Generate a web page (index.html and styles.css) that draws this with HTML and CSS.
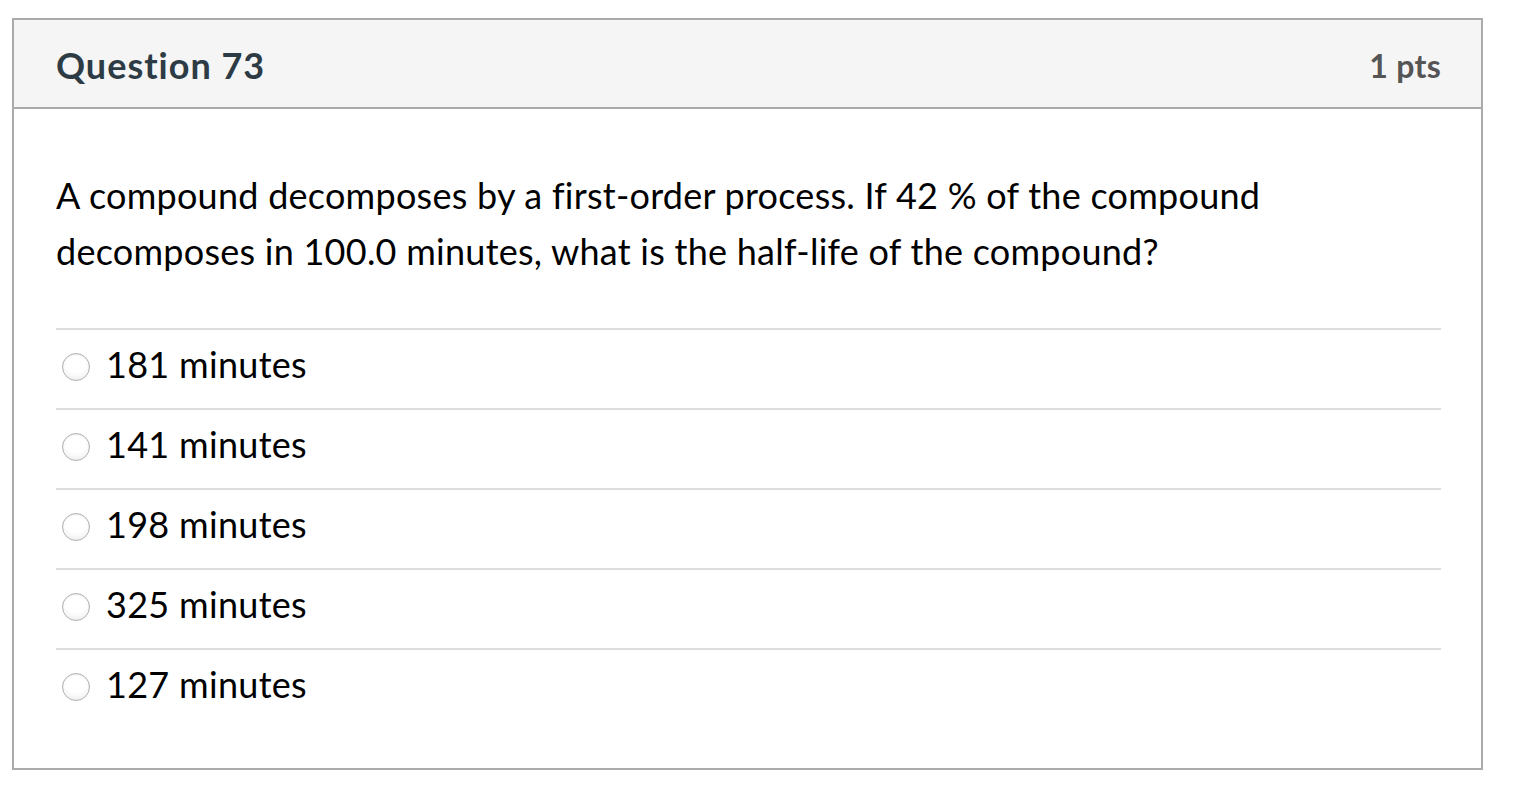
FILE: index.html
```html
<!DOCTYPE html>
<html>
<head>
<meta charset="utf-8">
<link rel="stylesheet" href="styles.css">
</head>
<body>
<div class="question">
  <div class="q-header">
    <h2 class="q-title">Question 73</h2>
    <span class="q-points">1 pts</span>
  </div>
  <div class="q-body">
    <p class="q-text">A compound decomposes by a first-order process. If 42 % of the compound decomposes in 100.0 minutes, what is the half-life of the compound?</p>
    <div class="answers">
      <label class="answer"><span class="radio"></span><span class="answer-text">181 minutes</span></label>
      <label class="answer"><span class="radio"></span><span class="answer-text">141 minutes</span></label>
      <label class="answer"><span class="radio"></span><span class="answer-text">198 minutes</span></label>
      <label class="answer"><span class="radio"></span><span class="answer-text">325 minutes</span></label>
      <label class="answer"><span class="radio"></span><span class="answer-text">127 minutes</span></label>
    </div>
  </div>
</div>
</body>
</html>
```

FILE: styles.css
```css
html, body {
  margin: 0;
  padding: 0;
  background: #fff;
}
body {
  padding: 18px 0 0 12px;
  font-family: Lato, "Open Sans", sans-serif;
  color: #000;
}
.question {
  width: 1467px;
  border: 2px solid #aaa;
}
.q-header {
  display: flex;
  align-items: center;
  justify-content: space-between;
  height: 84px;
  padding: 3px 40px 0 42px;
  background: #f5f5f5;
  border-bottom: 2px solid #aaa;
}
.q-title {
  margin: 0;
  font-size: 36px;
  font-weight: 700;
  letter-spacing: 1px;
  font-variant-ligatures: none;
  color: #2d3b45;
}
.q-points {
  font-size: 32px;
  font-weight: 700;
  letter-spacing: 0.3px;
  color: #555;
}
.q-body {
  padding: 58px 40px 40px 42px;
}
.q-text {
  margin: 0 0 49px;
  font-size: 36px;
  line-height: 56px;
  letter-spacing: 0.25px;
}
.answer {
  display: flex;
  align-items: flex-start;
  height: 54px;
  padding: 7px 0 17px;
  border-top: 2px solid #ddd;
}
.radio {
  flex: none;
  width: 26px;
  height: 26px;
  margin: 16px 16px 0 6px;
  border-radius: 50%;
  border: 1px solid #b0b0b0;
  background: radial-gradient(circle at 50% 35%, #ffffff 45%, #e8e8e8 100%);
  box-shadow: inset 0 1px 1px rgba(0,0,0,0.08);
}
.answer-text {
  font-size: 36px;
  line-height: 54px;
  letter-spacing: 0.3px;
}
```
